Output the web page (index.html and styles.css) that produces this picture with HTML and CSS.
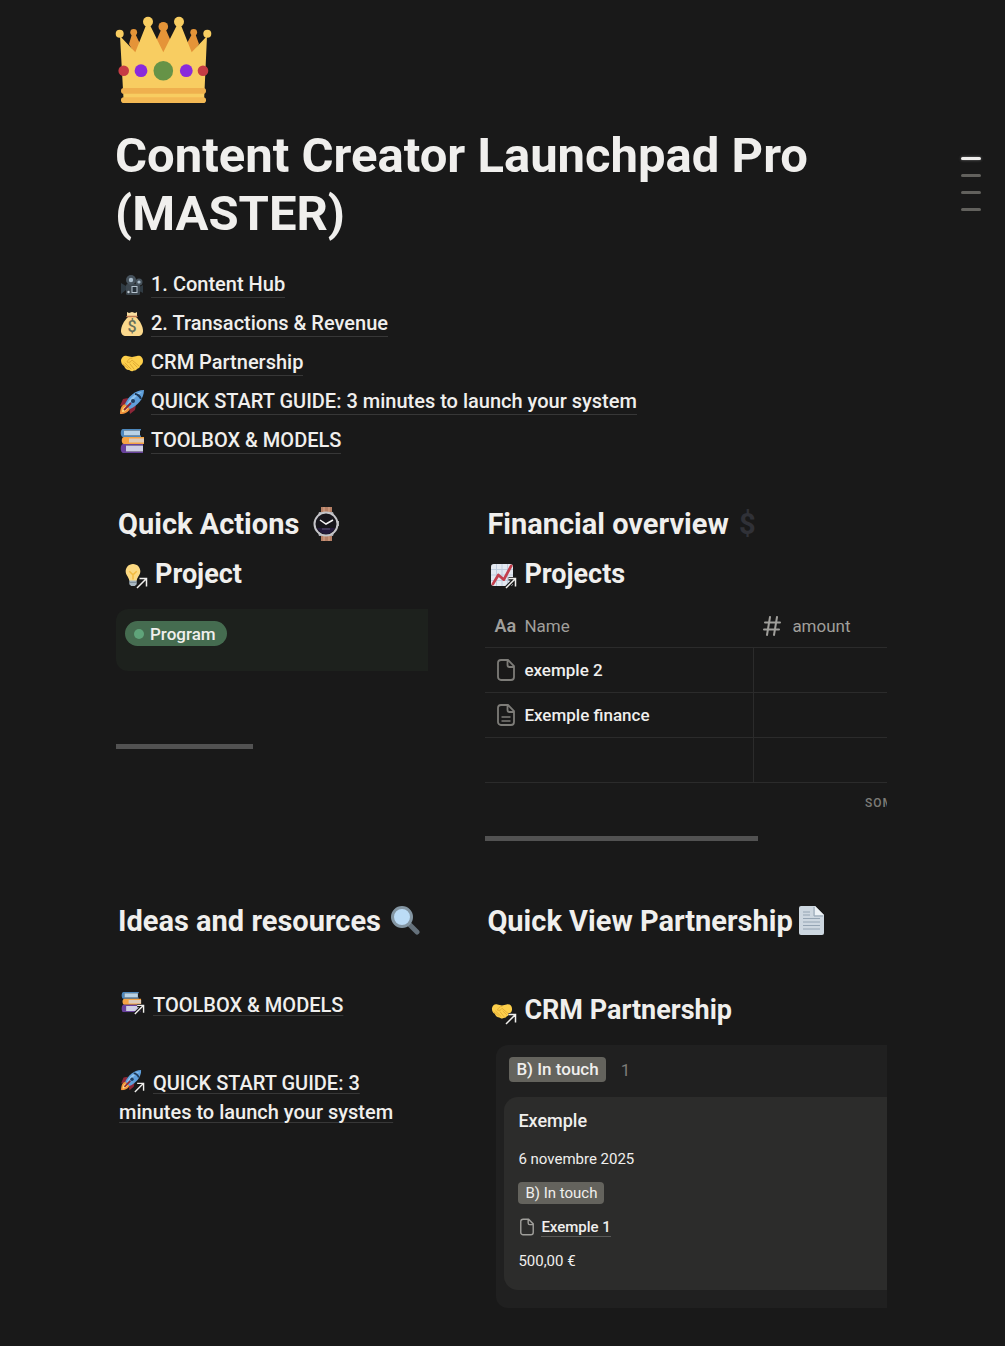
FILE: index.html
```
<!DOCTYPE html>
<html lang="en">
<head>
  <meta charset="UTF-8" />
  <meta name="viewport" content="width=device-width, initial-scale=1" />
  <title>Content Creator Launchpad Pro (MASTER)</title>
  <link rel="stylesheet" href="styles.css">
</head>
<body>
  <!-- shared icons -->
  <svg class="sprite" aria-hidden="true">
    <symbol id="camera" viewBox="0 0 24 24">
      <path d="M1 10l5 3v4l-5 4zM23 12l-4 2v4l4 2z" fill="#2f3a42"/>
      <rect x="6" y="11" width="14" height="11" rx="1.5" fill="#3c464e"/>
      <circle cx="11" cy="7" r="5" fill="#46525c"/>
      <circle cx="19" cy="9" r="3.5" fill="#46525c"/>
      <circle cx="11" cy="7" r="2.2" fill="#a9bccb"/>
      <circle cx="19" cy="9" r="1.6" fill="#a9bccb"/>
      <rect x="12" y="13.500" width="5" height="6" fill="#27313a" stroke="#b6c4cf"/>
      <circle cx="8.500" cy="19" r="1.200" fill="#c3ced6"/>
    </symbol>
    <symbol id="bag" viewBox="0 0 24 24">
      <path d="M7 0l2 1 3-1 3 1 2-1v5H7z" fill="#fbdfa0"/>
      <path d="M8 5h8c4 4 7 9 7 14 0 3-2 5-5 5H6c-3 0-5-2-5-5C1 14 4 9 8 5z" fill="#fbd98d"/>
      <path d="M7 4.500h10" stroke="#c07a50" stroke-width="1.500" stroke-linecap="round"/>
      <text x="12" y="20" text-anchor="middle" class="bag-sign">$</text>
    </symbol>
    <symbol id="hands" viewBox="0 0 24 24">
      <path d="M1 9c1-3 3-5 6-4l5 1 5-1c3-1 6 1 6 5 0 3-2 4-3 5 0 2-2 2-3 3-1 2-3 1-4 2-2 1-3-1-4-1-3 0-4-2-5-4-2-1-3-3-3-6z" fill="#fdcf4b"/>
      <path d="M12 7c-3 0-4 2-5 4 2 1 4 0 5-2l7 6M3 13l5 4m-3-5l6 6m-1-5l4 5m-1-6l4 4" fill="none" stroke="#e0ab35" stroke-linecap="round"/>
    </symbol>
    <symbol id="rocket" viewBox="0 0 24 24">
      <path d="M8 8l-5 1-3 7 6-2zM16 15l-1 5-5 4-1-6z" fill="#8d2638"/>
      <path d="M6 14c-4 0-6 4-6 10 5 0 9-2 10-6z" fill="#f3923a"/>
      <path d="M6 16c-3 1-4 3-4 6 3 0 5-2 6-4z" fill="#ffdc79"/>
      <path d="M24 0C15 0 8 7 5 14l5 5c7-3 14-10 14-19z" fill="#5f9fdb"/>
      <path d="M22 2c-7 1-12 6-15 12l1 1C12 10 16 6 22 2z" fill="#8fc4ef"/>
      <path d="M15 4c2 0 5 2 6 5" fill="none" stroke="#1c3553" stroke-width="2"/>
      <circle cx="13" cy="11" r="2" fill="#213d5e"/>
      <path d="M4 20l7-7" stroke="#8d2638" stroke-width="2"/>
    </symbol>
    <symbol id="books" viewBox="0 0 24 24">
      <path d="M3 0h18v1.500H4v5h17V8H3C0 8 0 0 3 0z" fill="#4d88bd"/>
      <path d="M4 1.500h16v5H4z" fill="#b9d3e6"/>
      <path d="M4 8h20v7H4c-3 0-3-7 0-7z" fill="#f5a344"/>
      <path d="M9 9.500h15v4H9z" fill="#dccbbb"/>
      <path d="M3 15h20v1.500H6v6h17V24H3c-3 0-3-9 0-9z" fill="#68419c"/>
      <path d="M6 16.500h17v6H6z" fill="#cfcfe5"/>
    </symbol>
    <symbol id="bulb" viewBox="0 0 24 24">
      <path d="M8 16h8v6l-2 2h-4l-2-2z" fill="#a9b8c2"/>
      <path d="M12 0C7 0 4 4 4 8c0 4 3 6 4 10h8c1-4 4-6 4-10 0-4-3-8-8-8z" fill="#fcd982"/>
      <path d="M8 8l3 3h2l3-3M12 11v6" fill="none" stroke="#f2b93e" stroke-width="1.500"/>
      <path d="M8 20h8" stroke="#73838f"/>
    </symbol>
    <symbol id="chart" viewBox="0 0 24 24">
      <rect width="24" height="24" rx="3" fill="#e3e8f0"/>
      <path d="M6 0v24M12 0v24M18 0v24M0 6h24M0 12h24M0 18h24" stroke="#bccbdc"/>
      <path d="M2 22l6-10 6 5 8-15" fill="none" stroke="#c33f4d" stroke-width="3" stroke-linecap="round" stroke-linejoin="round"/>
    </symbol>
    <symbol id="arrow" viewBox="0 0 12 12">
      <path d="M1 11L10.500 1.500M3.500 1.500h7v8" fill="none" stroke="#191919" stroke-width="4"/>
      <path d="M1 11L10.500 1.500M3.500 1.500h7v8" fill="none" stroke="#f0efed" stroke-width="1.500"/>
    </symbol>
    <symbol id="page" viewBox="0 0 18 22">
      <path d="M4 1h7l6 6v11a3 3 0 0 1-3 3H4a3 3 0 0 1-3-3V4a3 3 0 0 1 3-3z M10.500 1v5a2 2 0 0 0 2 2H17" fill="none" stroke="currentColor" stroke-width="1.800"/>
    </symbol>
  </svg>

  <main class="page">
    <svg class="crown" viewBox="0 0 97 88" role="img" aria-label="Crown">
      <g fill="#e59438">
        <circle cx="18.700" cy="16.300" r="3.400"/>
        <circle cx="78.700" cy="16.300" r="3.400"/>
        <circle cx="48.300" cy="10.700" r="4.800"/>
        <path d="M17 18h3.400L26 30l-6 9-6-11zM77 18h3.400L84 28l-7 11-6-10zM46 14h5l7 16-9.500 10L39 30z"/>
      </g>
      <g fill="#f8cd61">
        <circle cx="4.700" cy="17.700" r="4"/>
        <circle cx="33" cy="5.700" r="5"/>
        <circle cx="64" cy="5.700" r="5"/>
        <circle cx="92.300" cy="17.700" r="4"/>
        <path d="M5 20l15.300 16.300L31.500 8h3l13.800 28.300L62.500 8h3l11.200 28.300L92 20l-3 66H8.700z"/>
      </g>
      <rect x="6" y="72" width="85" height="5.700" rx="2.800" fill="#efb04e"/>
      <rect x="6" y="81.300" width="85" height="5.700" rx="2.800" fill="#f3b954"/>
      <circle cx="8.700" cy="54.700" r="5.300" fill="#c63c44"/>
      <circle cx="88" cy="54.700" r="5.300" fill="#c63c44"/>
      <circle cx="26" cy="54.700" r="6.400" fill="#8a2bdb"/>
      <circle cx="71.300" cy="54.700" r="6.400" fill="#8a2bdb"/>
      <circle cx="48.300" cy="54.700" r="9.800" fill="#669347"/>
    </svg>

    <h1>Content Creator Launchpad Pro (MASTER)</h1>

    <ul class="page-links">
      <li><a href="#"><svg><use href="#camera"/></svg><span>1. Content Hub</span></a></li>
      <li><a href="#"><svg><use href="#bag"/></svg><span>2. Transactions &amp; Revenue</span></a></li>
      <li><a href="#"><svg><use href="#hands"/></svg><span>CRM Partnership</span></a></li>
      <li><a href="#"><svg><use href="#rocket"/></svg><span>QUICK START GUIDE: 3 minutes to launch your system</span></a></li>
      <li><a href="#"><svg><use href="#books"/></svg><span>TOOLBOX &amp; MODELS</span></a></li>
    </ul>

    <div class="columns">
      <section id="actions">
        <h2>Quick Actions
          <svg class="watch" viewBox="0 0 26 34">
            <path d="M8 0h11v8H8zM8 26h11v8H8z" fill="#b57f65"/>
            <path d="M11 0v34M16 0v34" stroke="#d8a68a"/>
            <path d="M6 5l-2 6h18l-2-6zM6 29l-2-6h18l-2 6zM23 14h3v5h-3z" fill="#a9a9ad"/>
            <circle cx="13" cy="17" r="11.500" fill="#17161c" stroke="#c4c4c8" stroke-width="2"/>
            <path d="M4 21c4 8 14 8 18 0z" fill="#241a3b"/>
            <path d="M7 13l6 4 7-4" fill="none" stroke="#f3f3f3" stroke-width="1.500"/>
            <path d="M9 22h8" stroke="#5d5678"/>
          </svg>
        </h2>
        <h3>
          <svg class="link-icon" viewBox="0 0 26 25"><use href="#bulb" width="22" height="22"/><use href="#arrow" x="14" y="13" width="12" height="12"/></svg>
          Project
        </h3>
        <div class="group">
          <span class="status">Program</span>
        </div>
        <div class="scrollbar short"></div>
      </section>

      <section id="finance">
        <h2>Financial overview <span class="dollar">$</span></h2>
        <h3>
          <svg class="link-icon" viewBox="0 0 26 25"><use href="#chart" width="22" height="22"/><use href="#arrow" x="14" y="13" width="12" height="12"/></svg>
          Projects
        </h3>
        <div class="clip">
          <table>
            <thead>
              <tr>
                <th class="name"><div class="cell"><b>Aa</b>Name</div></th>
                <th><div class="cell"><svg class="hash" viewBox="0 0 18 20"><path d="M7 1L4 19M14 1l-3 18M2 6.500h15M1 13.500h15" fill="none" stroke="currentColor" stroke-width="2" stroke-linecap="round"/></svg>amount</div></th>
              </tr>
            </thead>
            <tbody>
              <tr>
                <td><div class="cell"><svg class="doc"><use href="#page"/></svg>exemple 2</div></td>
                <td></td>
              </tr>
              <tr>
                <td><div class="cell"><svg class="doc" viewBox="0 0 18 22"><use href="#page"/><path d="M4.500 13h9M4.500 17h9" stroke="currentColor" stroke-width="1.500"/></svg>Exemple finance</div></td>
                <td></td>
              </tr>
              <tr>
                <td></td>
                <td></td>
              </tr>
            </tbody>
            <tfoot>
              <tr>
                <td></td>
                <td>SOMME</td>
              </tr>
            </tfoot>
          </table>
        </div>
        <div class="scrollbar"></div>
      </section>

      <section id="ideas">
        <h2>Ideas and resources
          <svg class="search" viewBox="0 0 29 29">
            <path d="M18 18l8 8" stroke="#65717b" stroke-width="5" stroke-linecap="round"/>
            <circle cx="11" cy="11" r="9.500" fill="#bcdcf6" stroke="#8496a3" stroke-width="3"/>
          </svg>
        </h2>
        <p><svg viewBox="0 0 26 25"><use href="#books" width="22" height="22"/><use href="#arrow" x="14" y="13" width="12" height="12"/></svg><a href="#">TOOLBOX &amp; MODELS</a></p>
        <p><svg viewBox="0 0 26 25"><use href="#rocket" width="22" height="22"/><use href="#arrow" x="14" y="13" width="12" height="12"/></svg><a href="#">QUICK START GUIDE: 3 minutes to launch your system</a></p>
      </section>

      <section id="partnership">
        <h2>Quick View Partnership<svg class="sheet" viewBox="0 0 25 29">
            <path d="M2 0h14l9 9v18a2 2 0 0 1-2 2H2a2 2 0 0 1-2-2V2a2 2 0 0 1 2-2z" fill="#cdd7e0"/>
            <path d="M16 0l9 9h-9z" fill="#edf2f6"/>
            <path d="M15 1v9h9M4 6h7M4 9h7M4 12.500h17M4 16h17M4 19.500h17M4 23h17" fill="none" stroke="#94a4b3"/>
          </svg></h2>
        <h3>
          <svg class="link-icon" viewBox="0 0 26 25"><use href="#hands" width="22" height="22"/><use href="#arrow" x="14" y="13" width="12" height="12"/></svg>
          CRM Partnership
        </h3>
        <div class="board">
          <div class="board-head"><span class="tag">B) In touch</span><span class="count">1</span></div>
          <article class="card">
            <h4>Exemple</h4>
            <div>6 novembre 2025</div>
            <div><span class="tag small">B) In touch</span></div>
            <div><a href="#"><svg><use href="#page"/></svg><span>Exemple 1</span></a></div>
            <div>500,00 €</div>
          </article>
        </div>
      </section>
    </div>
  </main>

  <nav class="rail" aria-label="Sections">
    <a class="current" href="#actions" aria-label="Quick Actions"></a>
    <a href="#finance" aria-label="Financial overview"></a>
    <a href="#ideas" aria-label="Ideas and resources"></a>
    <a href="#partnership" aria-label="Quick View Partnership"></a>
  </nav>
</body>
</html>
```
FILE: styles.css
```
* {
  box-sizing: border-box;
}
body {
  display: flex;
  margin: 0;
  background-color: #191919;
  color: #f0efed;
  font-family: Roboto, "Liberation Sans", sans-serif;
  font-size: 20px;
}
h1, h2, h3, h4, ul, p {
  margin: 0;
  padding: 0;
}
a {
  color: inherit;
  text-decoration: none;
}
.sprite {
  display: none;
}
.bag-sign {
  font-size: 16px;
  font-weight: 500;
  fill: #67705c;
}
.page {
  flex: 1;
  min-width: 0;
  padding: 16px 0 38px 115px;
}
.crown {
  display: block;
  width: 97px;
  height: 88px;
}
h1 {
  margin-top: 23px;
  font-size: 49px;
  line-height: 58px;
  font-weight: 700;
}

/* page list */
.page-links {
  margin-top: 21px;
  padding-left: 5px;
  list-style: none;
}
.page-links li {
  height: 39px;
}
.page-links a {
  display: inline-flex;
  align-items: center;
  height: 39px;
  gap: 7px;
  font-weight: 500;
}
.page-links svg {
  width: 24px;
  height: 24px;
  margin-top: 2px;
}
.page-links span {
  padding: 2px 0 1px;
  border-bottom: 1px solid #373737;
}

.columns {
  display: grid;
  grid-template-columns: 7fr 9fr;
  column-gap: 57px;
  row-gap: 62px;
  margin-top: 47px;
  padding-left: 1px;
}
section {
  min-width: 0;
}
h2 {
  padding-left: 2px;
  font-size: 29px;
  line-height: 36px;
  font-weight: 700;
  white-space: nowrap;
}
h2 svg {
  vertical-align: -4px;
}
.watch {
  width: 26px;
  height: 34px;
  margin-left: 6px;
  vertical-align: -7px;
}
.search {
  width: 29px;
  height: 29px;
  margin-left: 3px;
}
.sheet {
  width: 25px;
  height: 29px;
  margin-left: 6px;
}
.dollar {
  margin-left: 3px;
  color: #303137;
}
h3 {
  display: flex;
  align-items: center;
  gap: 7px;
  margin-top: 15px;
  padding-left: 6px;
  font-size: 27px;
  line-height: 34px;
  font-weight: 700;
}
.link-icon {
  width: 26px;
  height: 25px;
  margin-top: 4px;
}

/* quick actions */
.group {
  height: 62px;
  margin-top: 18px;
  padding: 12px 9px;
  border-radius: 12px 0 0 12px;
  background-color: #1d211d;
}
.status {
  display: flex;
  align-items: center;
  gap: 6px;
  width: fit-content;
  height: 25px;
  padding: 0 11px 0 9px;
  border-radius: 13px;
  background-color: #456c50;
  font-size: 17px;
  font-weight: 500;
}
.status::before {
  content: '';
  width: 10px;
  height: 10px;
  border-radius: 50%;
  background-color: #5fa47a;
}
.scrollbar {
  width: 68%;
  height: 5px;
  margin-top: 22px;
  background-color: #525252;
}
.scrollbar.short {
  width: 44%;
  margin-top: 73px;
}

/* finance table */
.clip {
  margin-top: 14px;
  overflow: hidden;
}
table {
  width: 437px;
  table-layout: fixed;
  border-collapse: collapse;
  font-size: 17px;
}
th, td {
  height: 45px;
  padding: 0 9px;
  text-align: left;
  font-weight: 500;
  border-bottom: 1px solid #2b2b2b;
}
th {
  height: 42px;
  color: #a09f9b;
  font-weight: 400;
}
.name {
  width: 268px;
}
tbody td:first-child {
  border-right: 1px solid #2b2b2b;
}
tfoot td {
  height: 32px;
  padding-top: 10px;
  border: 0;
  color: #7d7c78;
  font-size: 12px;
  letter-spacing: 1px;
  text-align: right;
}
.cell {
  display: flex;
  align-items: center;
  gap: 8px;
}
.cell b {
  width: 22px;
  font-weight: 600;
  font-size: 18px;
}
.hash {
  width: 18px;
  height: 20px;
  margin: 0 3px 0 1px;
}
.doc {
  width: 18px;
  height: 22px;
  margin: 0 1px 0 3px;
  color: #7d7c78;
}

/* ideas */
#ideas h2 {
  margin-bottom: 52px;
}
#ideas p {
  margin-bottom: 49px;
  padding-left: 3px;
  line-height: 29px;
  font-weight: 500;
}
#ideas p svg {
  width: 24px;
  height: 23px;
  margin: 0 8px 0 2px;
  vertical-align: -3px;
}
#ideas a {
  text-decoration: underline 1px #373737;
  text-underline-offset: 3px;
  text-decoration-skip-ink: none;
}

/* partnership board */
#partnership h3 {
  margin-top: 54px;
}
.board {
  margin: 18px 0 0 11px;
  padding: 12px 0 18px 8px;
  border-radius: 12px 0 0 12px;
  background-color: #202020;
}
.board-head {
  display: flex;
  align-items: center;
  gap: 15px;
  padding-left: 5px;
  font-size: 17px;
}
.tag {
  display: inline-block;
  padding: 0 7px;
  border-radius: 4px;
  background-color: #64635d;
  font-size: 17px;
  line-height: 25px;
  font-weight: 500;
}
.tag.small {
  font-size: 15px;
  line-height: 22px;
  font-weight: 400;
}
.count {
  color: #7d7c78;
}
.card {
  margin-top: 15px;
  padding: 10px 14px 12px;
  border-radius: 14px 0 0 14px;
  background-color: #2c2c2b;
  font-size: 15px;
}
.card h4 {
  margin-bottom: 7px;
  font-size: 18px;
  line-height: 28px;
  font-weight: 500;
}
.card div {
  display: flex;
  align-items: center;
  height: 34px;
}
.card a {
  display: flex;
  align-items: center;
  gap: 7px;
  font-weight: 500;
}
.card a svg {
  width: 14px;
  height: 18px;
  margin-left: 2px;
  color: #a09f9b;
}
.card a span {
  border-bottom: 1px solid #5a5a58;
}

.rail {
  display: flex;
  flex-direction: column;
  gap: 14px;
  width: 118px;
  padding: 157px 24px 0 74px;
}
.rail a {
  height: 3px;
  border-radius: 2px;
  background-color: #62615d;
}
.rail .current {
  background-color: #f0efed;
  box-shadow: 0 0 3px #777;
}
```
